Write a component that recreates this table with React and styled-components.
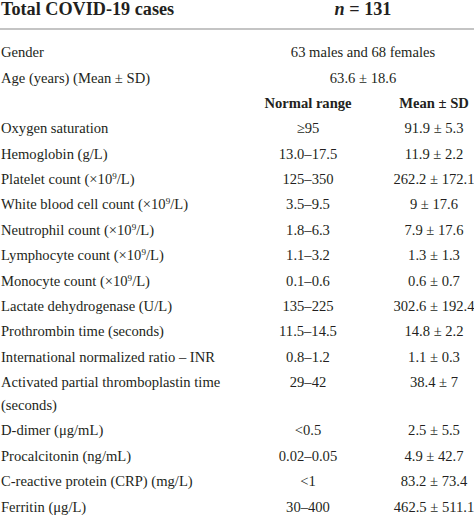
import React from 'react';
import styled, { createGlobalStyle } from 'styled-components';

const GlobalStyle = createGlobalStyle`
  html, body {
    margin: 0;
    padding: 0;
    background: #fff;
    overflow: hidden;
  }
  body {
    font-family: "Liberation Serif", "Times New Roman", serif;
    color: #231f20;
  }
`;

const Table = styled.div`
  width: 489px;
  font-size: 14.6px;
`;

const Grid = styled.div`
  display: grid;
  grid-template-columns: 237px 142px 110px;
  align-items: start;
`;

const HeadRow = styled(Grid)`
  font-weight: bold;
  font-size: 18.2px;
  line-height: 19px;
  padding-bottom: 9px;
  border-bottom: 2px solid #c4c4c4;
`;

const Body = styled.div`
  padding-top: 10px;
`;

const Row = styled(Grid)`
  line-height: 23px;
  padding: 1.2px 0;
  font-weight: ${(p) => (p.$bold ? 'bold' : 'normal')};
`;

const Label = styled.div`
  padding-left: 1px;
  padding-right: 10px;
`;

const Cell = styled.div`
  text-align: center;
  white-space: nowrap;
  grid-column: ${(p) => (p.$span ? 'span 2' : 'auto')};
`;

const Sup = styled.sup`
  font-size: 0.62em;
  line-height: 0;
  vertical-align: 0.55em;
`;

const Per109 = () => (
  <>
    (×10<Sup>9</Sup>/L)
  </>
);

const rows = [
  ['Oxygen saturation', '≥95', '91.9 ± 5.3'],
  ['Hemoglobin (g/L)', '13.0–17.5', '11.9 ± 2.2'],
  [<>Platelet count <Per109 /></>, '125–350', '262.2 ± 172.1'],
  [<>White blood cell count <Per109 /></>, '3.5–9.5', '9 ± 17.6'],
  [<>Neutrophil count <Per109 /></>, '1.8–6.3', '7.9 ± 17.6'],
  [<>Lymphocyte count <Per109 /></>, '1.1–3.2', '1.3 ± 1.3'],
  [<>Monocyte count <Per109 /></>, '0.1–0.6', '0.6 ± 0.7'],
  ['Lactate dehydrogenase (U/L)', '135–225', '302.6 ± 192.4'],
  ['Prothrombin time (seconds)', '11.5–14.5', '14.8 ± 2.2'],
  ['International normalized ratio – INR', '0.8–1.2', '1.1 ± 0.3'],
  ['Activated partial thromboplastin time (seconds)', '29–42', '38.4 ± 7'],
  ['D-dimer (μg/mL)', '<0.5', '2.5 ± 5.5'],
  ['Procalcitonin (ng/mL)', '0.02–0.05', '4.9 ± 42.7'],
  ['C-reactive protein (CRP) (mg/L)', '<1', '83.2 ± 73.4'],
  ['Ferritin (μg/L)', '30–400', '462.5 ± 511.1'],
];

function App() {
  return (
    <>
      <GlobalStyle />
      <Table>
        <HeadRow>
          <Label>Total COVID-19 cases</Label>
          <Cell $span>
            <i>n</i> = 131
          </Cell>
        </HeadRow>
        <Body>
          <Row>
            <Label>Gender</Label>
            <Cell $span>63 males and 68 females</Cell>
          </Row>
          <Row>
            <Label>Age (years) (Mean ± SD)</Label>
            <Cell $span>63.6 ± 18.6</Cell>
          </Row>
          <Row $bold>
            <Label />
            <Cell>Normal range</Cell>
            <Cell>Mean ± SD</Cell>
          </Row>
          {rows.map((r, i) => (
            <Row key={i}>
              <Label>{r[0]}</Label>
              <Cell>{r[1]}</Cell>
              <Cell>{r[2]}</Cell>
            </Row>
          ))}
        </Body>
      </Table>
    </>
  );
}

export default App;
